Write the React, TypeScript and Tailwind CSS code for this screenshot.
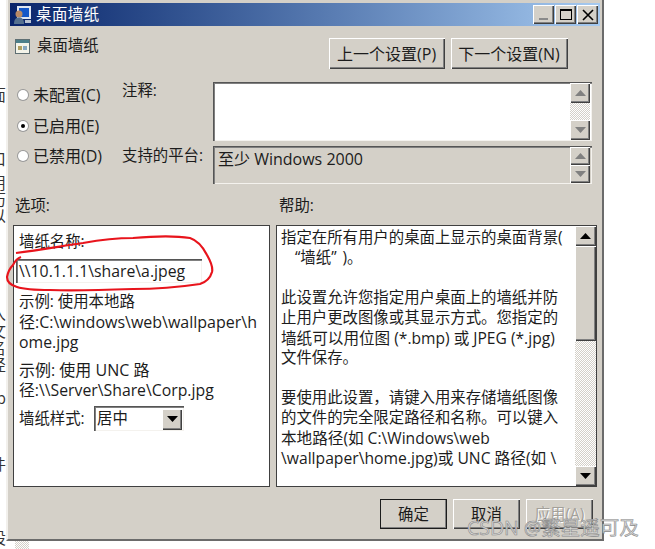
import type { ReactNode } from "react";

const raised =
  "bg-[#d4d0c8] shadow-[inset_1px_1px_0_#ffffff,inset_-1px_-1px_0_#404040,inset_-2px_-2px_0_#808080]";
const sunken =
  "shadow-[inset_1px_1px_0_#555555,inset_2px_2px_0_#808080,inset_-1px_-1px_0_#f4f2ee]";
const hatch =
  "bg-[repeating-conic-gradient(#ffffff_0_25%,#d4d0c8_0_50%)] bg-size-[2px_2px]";

function Sliver({ className, children }: { className: string; children: string }) {
  return (
    <div className={`flex h-[16px] w-[6px] justify-end overflow-hidden ${className}`}>
      <span className="shrink-0 leading-[16px]">{children}</span>
    </div>
  );
}

function Radio({ label, checked }: { label: string; checked?: boolean }) {
  return (
    <div className="flex h-[30.5px] items-center">
      <span className="flex h-[10px] w-[10px] items-center justify-center rounded-full bg-white shadow-[0_0_0_1px_#9a9a9a]">
        {checked && <span className="h-[4px] w-[4px] rounded-full bg-black" />}
      </span>
      <span className="ml-[5px] text-[16px] whitespace-nowrap">{label}</span>
    </div>
  );
}

function Arrow({ down, dark }: { down?: boolean; dark?: boolean }) {
  return (
    <svg width="11" height="6" viewBox="0 0 11 6">
      <path
        d={down ? "M0 0H11L5.5 6Z" : "M0 6H11L5.5 0Z"}
        fill={dark ? "#000000" : "#808080"}
      />
    </svg>
  );
}

function ScrollBtn({ down, dark, className }: { down?: boolean; dark?: boolean; className: string }) {
  return (
    <div className={`flex shrink-0 items-center justify-center ${raised} ${className}`}>
      <Arrow down={down} dark={dark} />
    </div>
  );
}

function DialogBtn({ children, className = "" }: { children: ReactNode; className?: string }) {
  return (
    <button className={`flex h-[30px] w-[67px] items-center justify-center pt-[1px] ${raised} ${className}`}>
      {children}
    </button>
  );
}

export default function App() {
  return (
    <div className="relative flex h-[549px] w-[655px] overflow-hidden bg-white font-['Open_Sans','Noto_Sans_CJK_SC',sans-serif] text-[15.4px] leading-[20px] text-[#1c1c1c]">
      <div className="w-[6px] shrink-0 text-[#333333]">
        <Sliver className="mt-[88px]">面</Sliver>
        <Sliver className="mt-[48px]">口</Sliver>
        <Sliver className="mt-[8px]">用</Sliver>
        <Sliver className="mt-[1px]">历</Sliver>
        <Sliver className="mt-[0px]">以</Sliver>
        <Sliver className="mt-[82px]">入</Sliver>
        <Sliver className="mt-[1px]">文</Sliver>
        <Sliver className="mt-[1px]">名</Sliver>
        <Sliver className="mt-[1px]">径</Sliver>
        <Sliver className="mt-[17px]">p</Sliver>
        <Sliver className="mt-[50px]">件</Sliver>
        <Sliver className="mt-[58px]">设</Sliver>
      </div>

      <div className="flex w-[598px] shrink-0 flex-col">
        <div className="h-[541px] border-r-2 border-b-2 border-l-2 border-r-[#6b6b6b] border-b-[#6b6b6b] border-l-[#f2f0ec] bg-[#d4d0c8] pt-[3px]">
          {/* title bar */}
          <div className="ml-[2px] flex h-[23px] w-[590px] items-center bg-linear-to-r from-[#0a246a] to-[#a6caf0] pr-[2px] pl-[3px] text-white">
            <svg width="19" height="20" viewBox="0 0 19 20">
              <rect x="4" y="1" width="14" height="13" fill="#dfe6f2" />
              <rect x="6" y="3" width="10" height="9" fill="#1557c8" />
              <circle cx="6" cy="9" r="3.5" fill="#b98a66" />
              <path d="M1 19C1 14 3 12.5 6 12.5S11 14 11 19Z" fill="#55708f" />
              <rect x="12" y="15" width="6" height="3" fill="#b9c3d2" />
            </svg>
            <span className="ml-[4px] tracking-[0.5px]">桌面墙纸</span>
            <div className="ml-auto flex gap-px">
              <div className={`flex h-[19px] w-[21px] items-end justify-center pb-[4px] ${raised}`}>
                <span className="h-[2px] w-[9px] bg-[#8a8a8a]" />
              </div>
              <div className={`flex h-[19px] w-[21px] items-center justify-center ${raised}`}>
                <span className="h-[11px] w-[12px] border border-t-2 border-black" />
              </div>
              <div className={`flex h-[19px] w-[21px] items-center justify-center ${raised}`}>
                <svg width="12" height="12" viewBox="0 0 12 12">
                  <path d="M1 1L11 11M11 1L1 11" stroke="#000000" strokeWidth="1.6" />
                </svg>
              </div>
            </div>
          </div>

          {/* header row */}
          <div className="mt-[12px] flex h-[31px] items-start">
            <svg className="mt-[1px] ml-[7px]" width="15" height="15" viewBox="0 0 15 15">
              <rect x="0.5" y="0.5" width="14" height="14" fill="#f4f4ea" stroke="#5f6f73" />
              <rect x="1" y="1" width="13" height="3" fill="#4c7f8a" />
              <rect x="3" y="7" width="4" height="4" fill="#b0a060" />
              <rect x="8" y="7" width="4" height="4" fill="#88a8c0" />
            </svg>
            <span className="mt-[-2px] ml-[7px]">桌面墙纸</span>
            <div className="ml-[230px] flex gap-[6px] text-[16px]">
              <button className={`h-[31px] w-[116px] whitespace-nowrap ${raised}`}>上一个设置(P)</button>
              <button className={`h-[31px] w-[117px] whitespace-nowrap ${raised}`}>下一个设置(N)</button>
            </div>
          </div>

          {/* state and comment */}
          <div className="mt-[13px] flex h-[102px]">
            <div className="mt-[-2px] ml-[10px] w-[104px] shrink-0">
              <Radio label="未配置(C)" />
              <Radio label="已启用(E)" checked />
              <Radio label="已禁用(D)" />
            </div>
            <div className="w-[91px] shrink-0">
              <div className="mt-[-1px] h-[64px]">注释:</div>
              <div className="mt-[1px] whitespace-nowrap">支持的平台:</div>
            </div>
            <div className="flex w-[379px] shrink-0 flex-col gap-[5px]">
              <div className={`flex h-[59px] justify-end bg-white pt-[1px] pr-[2px] pb-[1px] ${sunken}`}>
                <div className={`flex w-[20px] flex-col ${hatch}`}>
                  <ScrollBtn className="h-[20px]" />
                  <div className="flex-1" />
                  <ScrollBtn className="h-[20px]" down />
                </div>
              </div>
              <div className={`flex h-[38px] justify-between pt-[1px] pr-[2px] pb-[1px] pl-[5px] ${sunken}`}>
                <span className="mt-[2px] text-[16px]">至少 Windows 2000</span>
                <div className="flex w-[20px] flex-col">
                  <ScrollBtn className="h-[18px]" />
                  <ScrollBtn className="h-[18px]" down />
                </div>
              </div>
            </div>
          </div>

          {/* section labels */}
          <div className="mt-[12px] flex h-[20px]">
            <span className="ml-[7px] w-[264px]">选项:</span>
            <span>帮助:</span>
          </div>

          {/* panels */}
          <div className="mt-[9px] ml-[5px] flex h-[262px] gap-[6px]">
            <div className="w-[257px] border border-[#404040] bg-white pt-[6px] pl-[2px]">
              <div className="ml-[3px]">墙纸名称:</div>
              <div className={`mt-[7px] flex h-[24px] w-[186px] items-center pl-[3px] text-[15.8px] ${sunken}`}>
                \\10.1.1.1\share\a.jpeg
              </div>
              <div className="mt-[9px] ml-[3px]">
                <div>示例: 使用本地路</div>
                <div className="text-[16px] whitespace-nowrap">径:C:\windows\web\wallpaper\h</div>
                <div className="text-[15.8px]">ome.jpg</div>
                <div className="mt-[8px] text-[16px]">示例: 使用 UNC 路</div>
                <div className="text-[15.8px] whitespace-nowrap">径:\\Server\Share\Corp.jpg</div>
              </div>
              <div className="mt-[6px] ml-[3px] flex items-center">
                <span className="w-[75px]">墙纸样式:</span>
                <div className={`flex h-[25px] w-[90px] items-center justify-between bg-white pt-[2px] pr-[2px] pb-[1px] pl-[3px] ${sunken}`}>
                  <span>居中</span>
                  <ScrollBtn className="h-[21px] w-[20px]" down dark />
                </div>
              </div>
            </div>

            <div className="flex w-[321px] border border-[#404040] bg-white">
              <div className="flex-1 pt-[2px] pl-[4px] whitespace-nowrap">
                <div>指定在所有用户的桌面上显示的桌面背景(</div>
                <div className="pl-[14px]">
                  “墙纸”<span className="ml-[6px]">)。</span>
                </div>
                <div className="h-[20px]" />
                <div>此设置允许您指定用户桌面上的墙纸并防</div>
                <div>止用户更改图像或其显示方式。您指定的</div>
                <div className="text-[15.6px]">墙纸可以用位图 (*.bmp) 或 JPEG (*.jpg)</div>
                <div>文件保存。</div>
                <div className="h-[20px]" />
                <div>要使用此设置，请键入用来存储墙纸图像</div>
                <div>的文件的完全限定路径和名称。可以键入</div>
                <div className="text-[15.6px]">本地路径(如 C:\Windows\web</div>
                <div className="text-[15.7px]">\wallpaper\home.jpg)或 UNC 路径(如 \</div>
              </div>
              <div className={`flex w-[21px] shrink-0 flex-col ${hatch}`}>
                <ScrollBtn className="h-[20px]" dark />
                <div className={`h-[95px] ${raised}`} />
                <div className="flex-1" />
                <ScrollBtn className="h-[20px]" down dark />
              </div>
            </div>
          </div>

          {/* dialog buttons */}
          <div className="mt-[12px] ml-[372px] flex gap-[6px]">
            <DialogBtn className="outline outline-[#1c1c1c] -outline-offset-1">确定</DialogBtn>
            <DialogBtn>取消</DialogBtn>
            <DialogBtn className="text-[#a3a09a] [text-shadow:1px_1px_0_#ffffff]">应用(A)</DialogBtn>
          </div>
        </div>
        <div className={`ml-[9px] h-[8px] w-[14px] ${hatch}`} />
      </div>

      {/* red hand-drawn marking */}
      <svg className="absolute top-0 left-0" width="655" height="549" viewBox="0 0 655 549" fill="none">
        <path
          d="M16 253C40 250 62 246 83 243C105 239 120 238 133 238C155 236 178 236 190 238C199 241 204 249 207 255C211 262 213 268 212 272C210 279 206 282 200 284C180 287 155 289 133 289C105 290 75 291 50 290C35 290 23 289 17 287C10 285 7 281 7 277C8 272 10 268 13 265C15 261 18 258 21 257"
          stroke="#e8141c"
          strokeWidth="2.2"
        />
      </svg>

      {/* watermark */}
      <div className="absolute top-[517px] left-[467px] text-[19.5px] leading-[22px] whitespace-nowrap text-[#dadada] [-webkit-text-stroke:0.6px_#8a8a8a]">
        CSDN @繁星遥可及
      </div>
    </div>
  );
}
